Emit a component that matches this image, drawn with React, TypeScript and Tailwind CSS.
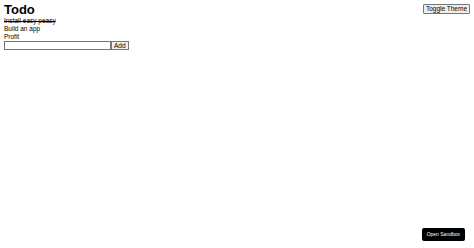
import React from "react";

export default function App() {
  const items = [
    { text: "Install easy peasy", done: true },
    { text: "Build an app", done: false },
    { text: "Profit", done: false },
  ];
  return (
    <div
      className="relative h-screen w-full bg-white text-black"
      style={{ fontFamily: '"Liberation Sans", Arial, sans-serif' }}
    >
      <div className="flex items-start justify-between px-[4px] pt-[2px]">
        <div>
          <h1 className="text-[13px] font-bold leading-[15px]">Todo</h1>
          <ul className="text-[6.5px] leading-[8px]">
            {items.map((it) => (
              <li key={it.text} className={it.done ? "line-through" : ""}>
                {it.text}
              </li>
            ))}
          </ul>
          <div className="flex items-center">
            <input className="h-[9px] w-[107px] border border-[#767676] bg-white text-[6.5px]" />
            <button className="h-[9px] border border-[#767676] bg-[#efefef] px-[2px] text-[6.5px] leading-[7px]">
              Add
            </button>
          </div>
        </div>
        <button className="mt-[2px] h-[10px] rounded-[1px] border border-[#767676] bg-[#efefef] px-[2px] text-[6.5px] leading-[8px]">
          Toggle Theme
        </button>
      </div>
      <button className="absolute bottom-[7px] right-[9px] flex h-[13px] items-center rounded-[2px] bg-black px-[5px] text-[5px] text-white">
        Open Sandbox
      </button>
    </div>
  );
}
